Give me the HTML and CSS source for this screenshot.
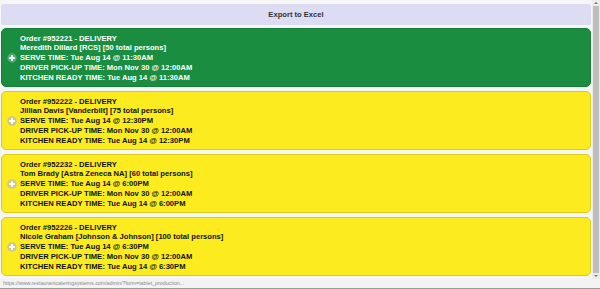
FILE: index.html
```html
<!DOCTYPE html>
<html lang="en">
<head>
    <meta charset="UTF-8">
    <title>Tablet Production</title>
    <link rel="stylesheet" href="styles.css">
</head>
<body>
    <div class="window">
        <div class="viewport">
            <div class="orders">
                <div class="export-bar">Export to Excel</div>

                <div class="order ready">
                    <svg class="toggle" viewBox="0 0 16 16"><circle cx="8" cy="8" r="7.5"/><path d="M8 3.5v9M3.5 8h9"/></svg>
                    <div class="details">
                        <div>Order #952221 - DELIVERY</div>
                        <div>Meredith Dillard [RCS] [50 total persons]</div>
                        <div>SERVE TIME: Tue Aug 14 @ 11:30AM</div>
                        <div>DRIVER PICK-UP TIME: Mon Nov 30 @ 12:00AM</div>
                        <div>KITCHEN READY TIME: Tue Aug 14 @ 11:30AM</div>
                    </div>
                </div>

                <div class="order pending">
                    <svg class="toggle" viewBox="0 0 16 16"><circle cx="8" cy="8" r="7.5"/><path d="M8 3.5v9M3.5 8h9"/></svg>
                    <div class="details">
                        <div>Order #952222 - DELIVERY</div>
                        <div>Jillian Davis [Vanderbilt] [75 total persons]</div>
                        <div>SERVE TIME: Tue Aug 14 @ 12:30PM</div>
                        <div>DRIVER PICK-UP TIME: Mon Nov 30 @ 12:00AM</div>
                        <div>KITCHEN READY TIME: Tue Aug 14 @ 12:30PM</div>
                    </div>
                </div>

                <div class="order pending">
                    <svg class="toggle" viewBox="0 0 16 16"><circle cx="8" cy="8" r="7.5"/><path d="M8 3.5v9M3.5 8h9"/></svg>
                    <div class="details">
                        <div>Order #952232 - DELIVERY</div>
                        <div>Tom Brady [Astra Zeneca NA] [60 total persons]</div>
                        <div>SERVE TIME: Tue Aug 14 @ 6:00PM</div>
                        <div>DRIVER PICK-UP TIME: Mon Nov 30 @ 12:00AM</div>
                        <div>KITCHEN READY TIME: Tue Aug 14 @ 6:00PM</div>
                    </div>
                </div>

                <div class="order pending">
                    <svg class="toggle" viewBox="0 0 16 16"><circle cx="8" cy="8" r="7.5"/><path d="M8 3.5v9M3.5 8h9"/></svg>
                    <div class="details">
                        <div>Order #952226 - DELIVERY</div>
                        <div>Nicole Graham [Johnson &amp; Johnson] [100 total persons]</div>
                        <div>SERVE TIME: Tue Aug 14 @ 6:30PM</div>
                        <div>DRIVER PICK-UP TIME: Mon Nov 30 @ 12:00AM</div>
                        <div>KITCHEN READY TIME: Tue Aug 14 @ 6:30PM</div>
                    </div>
                </div>
            </div>

            <div class="scrollbar">
                <div class="arrow up"></div>
                <div class="thumb"></div>
                <div class="arrow down"></div>
            </div>
        </div>

        <div class="status-bar">https://www.restaurantcateringsystems.com/admin/?form=tablet_production...</div>
    </div>
</body>
</html>
```

FILE: styles.css
```css
html, body {
    margin: 0;
    padding: 0;
}
body {
    font-family: "Liberation Sans", Arial, sans-serif;
    background-color: #f6f6f6;
    width: 600px;
    height: 289px;
    overflow: hidden;
}
.window {
    display: flex;
    flex-direction: column;
    height: 289px;
}
.viewport {
    display: flex;
    height: 279px;
}
.orders {
    flex: 1;
    padding: 4px 1px 0 1px;
    display: flex;
    flex-direction: column;
    gap: 4px;
}
.export-bar {
    height: 21px;
    margin-bottom: -1px;
    background-color: #dcdcf3;
    border-radius: 2px;
    display: flex;
    align-items: center;
    justify-content: center;
    font-size: 7.6px;
    font-weight: bold;
    color: #333;
}
.order {
    height: 59px;
    box-sizing: border-box;
    border-radius: 5px;
    display: flex;
    align-items: center;
    padding: 0 0 0 5px;
    font-size: 7.6px;
    font-weight: bold;
    line-height: 9.8px;
}
.ready {
    background-color: #1a8d40;
    border: 1px solid #16803a;
    color: #fff;
}
.pending {
    background-color: #fbeb1f;
    border: 1px solid #d9cc1c;
    color: #111;
}
.toggle {
    width: 10px;
    height: 10px;
    margin-right: 3px;
    flex-shrink: 0;
}
.toggle path {
    stroke: #fff;
    stroke-width: 3.2;
    fill: none;
}
.ready .toggle circle {
    fill: rgba(255, 255, 255, 0.25);
}
.pending .toggle circle {
    fill: #c9c59c;
}
.details {
    padding-top: 1px;
}
.scrollbar {
    width: 8px;
    background-color: #ececec;
    display: flex;
    flex-direction: column;
    align-items: center;
}
.thumb {
    flex: 1;
    width: 6px;
    background-color: #bdbdbd;
    margin: 2px 0;
}
.arrow {
    width: 0;
    height: 0;
    border-left: 2px solid transparent;
    border-right: 2px solid transparent;
    margin: 2px 0 0;
}
.arrow.up {
    border-bottom: 2px solid #777;
}
.arrow.down {
    border-top: 2px solid #777;
    margin: 0 0 2px;
}
.status-bar {
    height: 10px;
    box-sizing: border-box;
    background-color: #f3f3f3;
    border-bottom: 1px solid #9a9a9a;
    font-size: 5.3px;
    line-height: 9px;
    color: #8a8a8a;
    padding-left: 3px;
}
```
